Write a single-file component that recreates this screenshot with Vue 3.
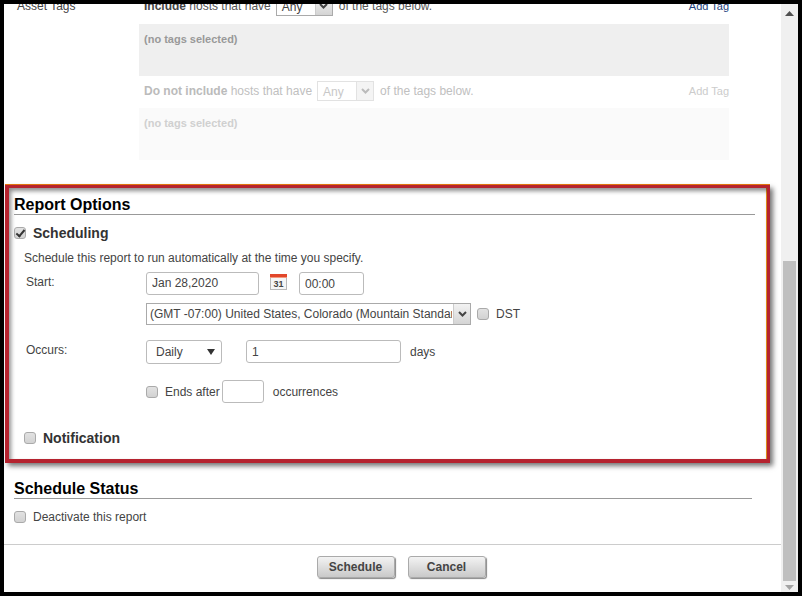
<script setup>
import {ref} from "vue";

const tagGroups = [
  {id: "include", lead: "Include", rest: "hosts that have", disabled: false},
  {id: "exclude", lead: "Do not include", rest: "hosts that have", disabled: true},
];

const scheduling = ref(true);
const notification = ref(false);
const dst = ref(false);
const endsAfter = ref(false);
const deactivate = ref(false);
const startDate = ref("Jan 28,2020");
const startTime = ref("00:00");
const interval = ref("1");
const occurrences = ref("");
const timezone = ref("(GMT -07:00) United States, Colorado (Mountain Standard Time)");
</script>

<template>
  <div class="frame">
    <main class="page">
      <div class="content">
        <section class="tags">
          <div class="tags__label">Asset Tags</div>
          <div class="tags__groups">
            <div
              v-for="group in tagGroups"
              :key="group.id"
              class="tag-group"
              :class="{ 'tag-group--disabled': group.disabled }"
            >
              <div class="tag-group__head">
                <span><b>{{ group.lead }}</b> {{ group.rest }}</span>
                <span class="combo combo--tag">
                  <span class="combo__value">Any</span>
                  <span class="combo__arrow">
                    <svg width="9" height="6" viewBox="0 0 9 6"><path d="M1 1 L4.5 4.5 L8 1" fill="none" stroke="currentColor" stroke-width="2" /></svg>
                  </span>
                </span>
                <span>of the tags below.</span>
                <a class="tag-group__add">Add Tag</a>
              </div>
              <div class="tag-group__box">(no tags selected)</div>
            </div>
          </div>
        </section>

        <section class="options">
          <h2 class="heading">Report Options</h2>
          <label class="check check--title">
            <input v-model="scheduling" type="checkbox" class="check__input" />
            <span>Scheduling</span>
          </label>
          <p class="options__intro">Schedule this report to run automatically at the time you specify.</p>

          <div class="form">
            <div class="form__label">Start:</div>
            <div class="form__cell">
              <div class="line line--start">
                <input v-model="startDate" class="field field--date" />
                <svg class="cal" width="17" height="16" viewBox="0 0 17 16">
                  <rect x="0.5" y="0.5" width="16" height="15" fill="#f6f6f6" stroke="#b9b9b9" />
                  <rect x="0" y="0" width="17" height="3" fill="#e2472b" />
                  <rect x="0" y="3" width="17" height="1" fill="#f39a80" />
                  <text x="8.5" y="13" text-anchor="middle" class="cal__text">31</text>
                </svg>
                <input v-model="startTime" class="field field--time" />
              </div>
              <div class="line line--zone">
                <span class="combo combo--zone">
                  <span class="combo__value">{{ timezone }}</span>
                  <span class="combo__arrow">
                    <svg width="9" height="6" viewBox="0 0 9 6"><path d="M1 1 L4.5 4.5 L8 1" fill="none" stroke="currentColor" stroke-width="2" /></svg>
                  </span>
                </span>
                <label class="check check--dst">
                  <input v-model="dst" type="checkbox" class="check__input" />
                  <span>DST</span>
                </label>
              </div>
            </div>

            <div class="form__label form__label--occurs">Occurs:</div>
            <div class="form__cell">
              <div class="line line--occurs">
                <span class="daily">
                  <span>Daily</span>
                  <svg width="8" height="6" viewBox="0 0 8 6"><path d="M0 0 H8 L4 6 Z" fill="#333" /></svg>
                </span>
                <input v-model="interval" class="field field--interval" />
                <span>days</span>
              </div>
              <div class="line line--ends">
                <label class="check check--ends">
                  <input v-model="endsAfter" type="checkbox" class="check__input" />
                  <span>Ends after</span>
                </label>
                <input v-model="occurrences" class="field field--count" />
                <span>occurrences</span>
              </div>
            </div>
          </div>

          <label class="check check--title check--notify">
            <input v-model="notification" type="checkbox" class="check__input" />
            <span>Notification</span>
          </label>
        </section>

        <section class="status">
          <h2 class="heading">Schedule Status</h2>
          <label class="check check--deactivate">
            <input v-model="deactivate" type="checkbox" class="check__input" />
            <span>Deactivate this report</span>
          </label>
        </section>
      </div>

      <footer class="footer">
        <button class="btn" type="button">Schedule</button>
        <button class="btn" type="button">Cancel</button>
      </footer>
    </main>

    <aside class="scrollbar" aria-hidden="true">
      <svg width="9" height="5" viewBox="0 0 9 5"><path d="M0 5 L4.5 0 L9 5 Z" fill="#505050" /></svg>
      <div class="scrollbar__track"><div class="scrollbar__thumb"></div></div>
      <svg width="9" height="5" viewBox="0 0 9 5"><path d="M0 0 L4.5 5 L9 0 Z" fill="#a3a3a3" /></svg>
    </aside>
  </div>
</template>

<style>
html,
body {
  margin: 0;
  background: #000;
}
</style>

<style scoped>
.frame {
  width: 802px;
  height: 596px;
  box-sizing: border-box;
  border: 4px solid #000;
  display: flex;
  background: #fff;
  font-family: "Liberation Sans", Arial, sans-serif;
  font-size: 12px;
  color: #444;
  overflow: hidden;
}

.page {
  flex: 1;
  min-width: 0;
  display: flex;
  flex-direction: column;
  overflow: hidden;
}

.content {
  flex: 1;
  min-height: 0;
  overflow: hidden;
}

/* the page is scrolled down a little, so the first row is cut off */
.tags {
  display: flex;
  margin-top: -8px;
  padding-left: 13px;
}

.tags__label {
  width: 122px;
  flex-shrink: 0;
  padding-top: 3px;
}

.tags__groups {
  width: 590px;
}

.tag-group__head {
  display: flex;
  align-items: center;
  gap: 5px;
  height: 20px;
  padding-left: 5px;
  color: #555;
}

.tag-group__head b {
  color: #444;
}

.tag-group__add {
  margin-left: auto;
  font-size: 11px;
  color: #22427d;
}

.tag-group__box {
  height: 52px;
  margin-top: 8px;
  margin-bottom: 5px;
  padding: 9px 5px;
  box-sizing: border-box;
  background: #efefef;
  font-size: 11px;
  font-weight: bold;
  color: #999;
}

.tag-group--disabled .tag-group__head {
  color: #c0c0c0;
}

.tag-group--disabled .tag-group__head b {
  color: #bbb;
}

.tag-group--disabled .tag-group__add {
  color: #ccc;
}

.tag-group--disabled .tag-group__box {
  margin-top: 7px;
  margin-bottom: 0;
  background: #fafafa;
  color: #d0d0d0;
}

.tag-group--disabled .combo {
  border-color: #e2e2e2;
  color: #c8c8c8;
}

.tag-group--disabled .combo__arrow {
  background: #f4f4f4;
  border-left-color: #e2e2e2;
  color: #bbb;
}

.combo {
  display: inline-flex;
  box-sizing: border-box;
  border: 1px solid #aaa;
  background: #fff;
  color: #444;
}

.combo__value {
  flex: 1;
  min-width: 0;
  overflow: hidden;
  white-space: nowrap;
  align-self: center;
}

.combo__arrow {
  width: 16px;
  flex-shrink: 0;
  display: flex;
  align-items: center;
  justify-content: center;
  border-left: 1px solid #ccc;
  background: linear-gradient(#f2f2f2, #d4d4d4);
  color: #444;
}

.combo--tag {
  width: 57px;
  height: 20px;
  margin-right: 1px;
}

.combo--tag .combo__value {
  padding: 2px 0 0 5px;
}

.combo--zone {
  width: 325px;
  height: 22px;
}

.combo--zone .combo__value {
  padding-left: 3px;
  margin-right: 1px;
}

.options {
  box-sizing: border-box;
  width: 765px;
  height: 278px;
  margin: 25px 0 0 1px;
  padding: 8px 12px 0 5px;
  border: solid #b5232f;
  border-width: 3px 3px 4px 4px;
  box-shadow:
    3px 3px 5px rgba(0, 0, 0, 0.55),
    inset 2px 3px 4px rgba(0, 0, 0, 0.45),
    inset -1px 0 0 #e8941a,
    0 -1px 0 #ea7a10;
}

.heading {
  margin: 0;
  border-bottom: 1px solid #999;
  font-size: 16px;
  font-weight: bold;
  line-height: 18px;
  color: #000;
}

.check {
  display: flex;
  align-items: center;
  gap: 7px;
}

.check__input {
  appearance: none;
  position: relative;
  width: 12px;
  height: 12px;
  margin: 0;
  flex-shrink: 0;
  box-sizing: border-box;
  border: 1px solid #aaa;
  border-radius: 3px;
  background: linear-gradient(#e2e2e2, #d2d2d2);
}

.check__input:checked::after {
  content: "";
  position: absolute;
  left: 3px;
  top: 0;
  width: 3px;
  height: 7px;
  border: solid #333;
  border-width: 0 2px 2px 0;
  transform: rotate(40deg);
}

.check--title {
  font-size: 14px;
  font-weight: bold;
  color: #333;
  margin-top: 10px;
}

.options__intro {
  margin: 10px 0 0 10px;
  line-height: 14px;
}

.form {
  display: grid;
  grid-template-columns: 120px 1fr;
  margin: 6px 0 0 12px;
}

.form__label {
  padding-top: 4px;
  line-height: 14px;
}

.form__label--occurs {
  padding-top: 18px;
}

.form__cell {
  display: flex;
  flex-direction: column;
}

.line {
  display: flex;
  align-items: center;
}

.field {
  box-sizing: border-box;
  height: 23px;
  margin: 0;
  padding: 0 5px;
  border: 1px solid #bbb;
  border-radius: 3px;
  font: inherit;
  color: #444;
  outline: none;
}

.field--date {
  width: 113px;
}

.cal {
  margin: 0 12px 2px 11px;
}

.cal__text {
  font-family: "Liberation Sans", Arial, sans-serif;
  font-size: 9px;
  font-weight: bold;
  fill: #444;
}

.field--time {
  width: 65px;
  margin-top: 1px;
}

.line--zone {
  margin-top: 8px;
}

.check--dst {
  margin-left: 6px;
  margin-top: -1px;
}

.line--occurs {
  margin-top: 15px;
}

.daily {
  box-sizing: border-box;
  width: 76px;
  height: 24px;
  display: flex;
  align-items: center;
  justify-content: space-between;
  padding: 0 6px 0 9px;
  border: 1px solid #bbb;
  border-radius: 3px;
  background: #fff;
}

.field--interval {
  width: 155px;
  margin: 0 9px 1px 24px;
}

.line--ends {
  margin-top: 16px;
}

.check--ends {
  margin-right: 2px;
}

.field--count {
  width: 42px;
  margin-right: 9px;
}

.check--notify {
  margin: 27px 0 0 10px;
}

.status {
  margin: 17px 29px 0 10px;
}

.check--deactivate {
  margin-top: 11px;
}

.footer {
  flex-shrink: 0;
  box-sizing: border-box;
  height: 48px;
  display: flex;
  justify-content: center;
  gap: 13px;
  padding: 11px 0 0 17px;
  border-top: 1px solid #ccc;
}

.btn {
  width: 78px;
  height: 22px;
  padding: 0;
  border: 1px solid #aaa;
  border-radius: 3px;
  background: linear-gradient(#f3f3f3, #c9c9c9);
  box-shadow: 1px 1px 1px #888;
  font: bold 12px "Liberation Sans", Arial, sans-serif;
  color: #444;
}

.scrollbar {
  width: 17px;
  flex-shrink: 0;
  display: flex;
  flex-direction: column;
  align-items: center;
  padding: 7px 0 2px;
  box-sizing: border-box;
  background: #f0f0f0;
}

.scrollbar__track {
  flex: 1;
  width: 13px;
  display: flex;
  flex-direction: column;
  justify-content: flex-end;
  margin: 5px 0 4px;
}

.scrollbar__thumb {
  height: 320px;
  background: #bfbfbf;
}
</style>
